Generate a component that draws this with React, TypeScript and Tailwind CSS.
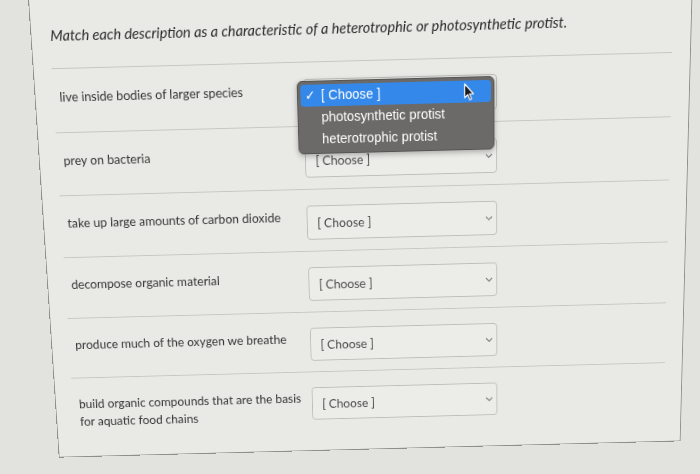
import React from "react";

const rows = [
  "live inside bodies of larger species",
  "prey on bacteria",
  "take up large amounts of carbon dioxide",
  "decompose organic material",
  "produce much of the oxygen we breathe",
  "build organic compounds that are the basis for aquatic food chains",
];

function Chevron() {
  return (
    <svg width="9" height="6" viewBox="0 0 9 6" className="shrink-0">
      <polyline points="1,1 4.5,4.5 8,1" fill="none" stroke="#7d7d7b" strokeWidth="1.2" />
    </svg>
  );
}

function Cursor() {
  return (
    <svg width="13" height="20" viewBox="0 0 13 20" className="absolute left-[187px] top-[5px]">
      <path
        d="M1.5 1.5 L1.5 16 L4.8 12.8 L7.2 18.2 L9.3 17.3 L6.9 12 L11.4 12 Z"
        fill="#1a1a1a"
        stroke="#ffffff"
        strokeWidth="1.2"
        strokeLinejoin="round"
      />
    </svg>
  );
}

function Popup() {
  const items = ["[ Choose ]", "photosynthetic protist", "heterotrophic protist"];
  return (
    <div className="absolute left-[-7px] top-[2px] z-10 h-[77px] w-[223px] rounded-[6px] border border-[#555452] bg-[#6c6a68] pt-[3px] font-['Liberation_Sans',Arial,sans-serif] text-[14.8px] text-white shadow-[0_2px_6px_rgba(0,0,0,0.3)]">
      {items.map((t, i) => (
        <div
          key={t}
          className={
            i === 0
              ? "mx-[3px] flex h-[23px] items-center rounded-[4px] bg-[#3388ea] pl-[5px]"
              : "mx-[3px] flex h-[23px] items-center pl-[5px]"
          }
        >
          <span className="w-[18px] font-['DejaVu_Sans',sans-serif] text-[14px] font-bold">{i === 0 ? "✓" : ""}</span>
          <span>{t}</span>
        </div>
      ))}
      <Cursor />
    </div>
  );
}

function Select({ open }: { open?: boolean }) {
  return (
    <div className="relative ml-[7px] h-[37px] w-[219px] shrink-0">
      <div className="flex h-full items-center justify-between rounded-[4px] border border-[#bdbdba] bg-[#ecece9] pl-[11px] pr-[4px] text-[14px] text-[#4a4a4a]">
        <span>[ Choose ]</span>
        <Chevron />
      </div>
      {open && <Popup />}
    </div>
  );
}

export default function App() {
  return (
    <div className="relative h-[474px] w-[700px] overflow-hidden bg-[#e2e2df] font-['Lato',sans-serif]">
      <div className="w-[745px] origin-[317px_0px] [transform:rotate(-1.5deg)_perspective(1000px)_rotateX(-8deg)_scaleX(0.9)]">
        <div className="-ml-[5px] -mt-[20px] w-[740px] border border-[#8f8f8c] bg-[#e9e9e6] px-[20px] pb-[18px] pt-[37px]">
          <p className="pl-[1px] text-[16.2px] italic leading-[22px] text-[#2a2a2a]">
            Match each description as a characteristic of a heterotrophic or photosynthetic protist.
          </p>
          <div className="mt-[23px]">
            {rows.map((r, i) => (
              <div key={r} className="flex items-start border-t border-[#c6c6c3] pb-[12px] pt-[17px]">
                <div className="mt-[2px] w-[275px] shrink-0 pl-[7px] text-[14px] leading-[20px] text-[#363636]">
                  {r}
                </div>
                <Select open={i === 0} />
              </div>
            ))}
          </div>
        </div>
      </div>
    </div>
  );
}
